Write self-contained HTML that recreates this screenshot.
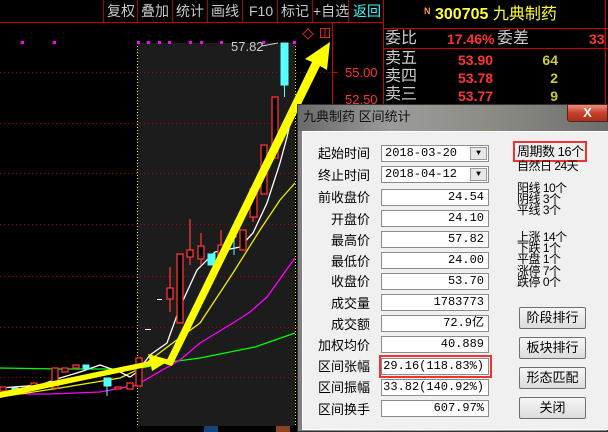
<!DOCTYPE html>
<html><head><meta charset="utf-8"><style>
*{margin:0;padding:0;box-sizing:border-box}
body{width:608px;height:432px;background:#000;position:relative;overflow:hidden;font-family:"Liberation Sans","Noto Sans CJK SC","WenQuanYi Zen Hei",sans-serif}
.a{position:absolute;white-space:nowrap}
.mi{position:absolute;top:3px;font-size:14px;color:#c8c8c8;line-height:16px}
.sep{position:absolute;top:0;width:1px;height:22px;background:#a00}
.lbl{position:absolute;font-size:13px;color:#000;right:238px;line-height:15px;text-align:right}
.in{position:absolute;left:381px;width:108px;height:17px;background:#fff;border:1px solid #8c8c8c;font-size:12px;line-height:15px;text-align:right;padding-right:4px;font-family:"Liberation Mono","Noto Sans CJK SC",monospace;color:#000}
.btn{position:absolute;left:519px;width:67px;height:22px;background:linear-gradient(#f6f6f6,#dcdcdc);border:1px solid #707070;border-radius:2px;font-size:13px;line-height:20px;text-align:center;color:#000}
.st{position:absolute;left:517px;font-size:12px;line-height:12px;color:#000;letter-spacing:-0.5px}
</style></head><body>
<!-- top bar -->
<div class="a" style="left:0;top:22px;width:384px;height:1px;background:#c00"></div>
<div class="sep" style="left:103px"></div><div class="sep" style="left:137px"></div><div class="sep" style="left:172px"></div><div class="sep" style="left:207px"></div><div class="sep" style="left:242px"></div><div class="sep" style="left:277px"></div><div class="sep" style="left:312px"></div><div class="sep" style="left:348px"></div>
<div class="mi" style="left:107px">复权</div><div class="mi" style="left:141px">叠加</div><div class="mi" style="left:176px">统计</div><div class="mi" style="left:211px">画线</div><div class="mi" style="left:249px;font-family:'Liberation Sans',sans-serif">F10</div><div class="mi" style="left:281px">标记</div><div class="mi" style="left:313px">+自选</div><div class="mi" style="left:353px;color:#3ff">返回</div>
<!-- chart -->
<svg class="a" style="left:0;top:0" width="384" height="432">
<rect x="138" y="43" width="157" height="383" fill="#1c1c1c"/>
<g stroke="#a00" stroke-dasharray="1,3" stroke-width="1">
<line x1="0" y1="72.5" x2="332" y2="72.5"/><line x1="0" y1="123.5" x2="332" y2="123.5"/><line x1="0" y1="173.5" x2="332" y2="173.5"/><line x1="0" y1="224.5" x2="332" y2="224.5"/><line x1="0" y1="276.5" x2="332" y2="276.5"/><line x1="0" y1="327.5" x2="332" y2="327.5"/><line x1="0" y1="377.5" x2="332" y2="377.5"/></g>
<g stroke="#ee0" stroke-dasharray="1,2"><line x1="137.5" y1="43" x2="137.5" y2="426"/><line x1="295.5" y1="43" x2="295.5" y2="426"/></g>
<g fill="#f0f"><rect x="21" y="41" width="3" height="3"/><rect x="53" y="41" width="3" height="3"/><rect x="137" y="41" width="3" height="3"/><rect x="147" y="41" width="3" height="3"/><rect x="158" y="41" width="3" height="3"/><rect x="168" y="41" width="3" height="3"/><rect x="189" y="41" width="3" height="3"/><rect x="200" y="41" width="3" height="3"/><rect x="220" y="41" width="3" height="3"/><rect x="262" y="41" width="3" height="3"/><rect x="293" y="41" width="3" height="3"/></g>
<line x1="332.5" y1="22" x2="332.5" y2="432" stroke="#c00"/>
<line x1="332" y1="72.5" x2="338" y2="72.5" stroke="#c00"/>
<text x="345" y="77" fill="#f33" font-size="13" font-family="Liberation Sans">55.00</text>
<text x="345" y="104" fill="#f33" font-size="13" font-family="Liberation Sans">52.50</text>
<text x="231" y="51" fill="#ccc" font-size="13" font-family="Liberation Sans">57.82</text>
<line x1="262" y1="46" x2="278" y2="43" stroke="#ccc"/>
<path d="M308 29 L313 34 L308 39 L303 34Z" fill="none" stroke="#d22"/>
<rect x="320.5" y="28.5" width="9" height="9" fill="none" stroke="#d22"/><line x1="325" y1="28" x2="325" y2="37" stroke="#d22"/>
<!-- MAs -->
<polyline fill="none" stroke="#0f0" stroke-width="1.3" points="0,368 60,369 137,369 170,362 200,358 255,347 295,333"/>
<polyline fill="none" stroke="#f0f" stroke-width="1.3" points="0,393 30,394 50,394 100,392 137,385 157,373 180,360 200,343 233,323 250,312 267,297 295,258"/>
<polyline fill="none" stroke="#ee0" stroke-width="1.3" points="0,397 60,388 120,378 137,370 170,345 200,323 233,273 260,230 280,200 295,183"/>
<polyline fill="none" stroke="#fff" stroke-width="1.3" points="0,388 40,385 60,378 80,372 100,365 120,372 130,377 137,372 150,355 167,343 180,307 197,270 215,252 240,247 253,233 267,203 280,163 287,137 292,115"/>
<!-- candles -->
<g fill="#000" stroke="#f33" stroke-width="1.3">
<line x1="170" y1="267" x2="170" y2="312"/><rect x="167" y="288" width="6" height="11"/>
<rect x="177" y="254" width="6" height="69"/>
<line x1="190" y1="219" x2="190" y2="265"/><rect x="187" y="250" width="6" height="7"/>
<line x1="201" y1="233" x2="201" y2="265"/><rect x="198" y="246" width="6" height="13"/>
<line x1="221" y1="230" x2="221" y2="265"/><rect x="218" y="245" width="6" height="12"/>
<rect x="240" y="230" width="6" height="20"/>
<line x1="253" y1="189" x2="253" y2="222"/><rect x="250" y="189" width="7" height="28"/>
<rect x="261" y="145" width="6" height="49"/>
<rect x="272" y="97" width="6" height="61"/>
<rect x="136" y="358" width="6" height="28"/>
<rect x="127" y="383" width="6" height="6"/><rect x="115" y="387" width="6" height="2"/>
<rect x="0" y="387" width="6" height="4"/><rect x="22" y="388" width="6" height="3"/><rect x="31" y="383" width="6" height="4"/>
<rect x="52" y="368" width="6" height="20"/><rect x="62" y="368" width="6" height="4"/><rect x="73" y="365" width="6" height="3"/>
</g>
<g fill="#5ff" stroke="#5ff"><rect x="208" y="254" width="7" height="11"/><rect x="232" y="232" width="4" height="5"/><line x1="234" y1="237" x2="234" y2="255"/><rect x="281" y="43" width="7" height="42"/><line x1="284.5" y1="85" x2="284.5" y2="97"/><rect x="104" y="378" width="7" height="8"/><line x1="107" y1="386" x2="107" y2="396"/><rect x="83" y="365" width="6" height="4"/><rect x="12" y="388" width="6" height="3"/></g>
<g stroke="#fff"><line x1="157" y1="299.5" x2="162" y2="299.5"/><line x1="145" y1="329.5" x2="151" y2="329.5"/></g>
<!-- arrows -->
<path d="M0 398 L0 392 L150 361 L148 354 L170 360 L152 371 L151 366 Z" fill="#ff0"/>
<path d="M165 364 L312 62 L305 59 L330 42 L327 70 L320 66 L172 366 Z" fill="#ff0"/>
<rect x="204" y="426" width="14" height="6" fill="#147"/><rect x="276" y="426" width="14" height="6" fill="#842"/>
</svg>
<!-- right panel -->
<div class="a" style="left:383px;top:0;width:1px;height:432px;background:#c00"></div>
<div class="a" style="left:605px;top:0;width:1px;height:110px;background:#c00"></div>
<div class="a" style="left:384px;top:28px;width:224px;height:1px;background:#c00"></div>
<div class="a" style="left:384px;top:48px;width:224px;height:1px;background:#c00"></div>
<div class="a" style="left:424px;top:6px;font-size:9px;color:#f93;font-weight:bold">N</div>
<div class="a" style="left:435px;top:5px;font-size:16px;color:#ff3;font-weight:bold;line-height:20px">300705 <span style="font-weight:normal">九典制药</span></div>
<div class="a" style="left:385px;top:30px;font-size:16px;color:#ccc;line-height:18px">委比</div>
<div class="a" style="left:447px;top:31px;font-size:14px;color:#f33;font-weight:bold">17.46%</div>
<div class="a" style="left:497px;top:30px;font-size:16px;color:#ccc;line-height:18px">委差</div>
<div class="a" style="left:589px;top:31px;font-size:14px;color:#f33;font-weight:bold">33</div>
<div class="a" style="left:385px;top:50px;font-size:16px;color:#ccc;line-height:18px">卖五<br>卖四<br>卖三</div>
<div class="a" style="left:458px;top:51px;font-size:14px;color:#f33;font-weight:bold;line-height:18px">53.90<br>53.78<br>53.77</div>
<div class="a" style="left:536px;top:51px;font-size:14px;color:#cc3;font-weight:bold;line-height:18px;text-align:right;width:22px">64<br>2<br>9</div>
<!-- dialog -->
<div class="a" style="left:297px;top:104px;width:311px;height:328px;background:linear-gradient(90deg,#7e7e7e,#a9a9a9 40%,#8c8c8c);border:1px solid #333"></div>
<div class="a" style="left:298px;top:105px;width:310px;height:26px;background:linear-gradient(90deg,#6a6a6a,#9b9b9b 30%,#8d8d86 60%,#6e6e6e)"></div>
<div class="a" style="left:303px;top:109px;font-size:13px;color:#111;line-height:16px">九典制药 区间统计</div>
<div class="a" style="left:567px;top:104px;width:41px;height:18px;background:linear-gradient(#e89080,#c8402c 50%,#a8301c);border:1px solid #522;border-radius:0 0 0 3px;color:#fff;font-weight:bold;font-size:13px;text-align:center;line-height:16px;font-family:'Liberation Sans',sans-serif">X</div>
<div class="a" style="left:302px;top:131px;width:306px;height:299px;background:#f0f0f0;border:1px solid #fff;border-right:none"></div>
<div class="lbl" style="top:146px">起始时间</div>
<div class="lbl" style="top:168px">终止时间</div>
<div class="lbl" style="top:190px">前收盘价</div>
<div class="lbl" style="top:212px">开盘价</div>
<div class="lbl" style="top:233px">最高价</div>
<div class="lbl" style="top:254px">最低价</div>
<div class="lbl" style="top:274px">收盘价</div>
<div class="lbl" style="top:296px">成交量</div>
<div class="lbl" style="top:317px">成交额</div>
<div class="lbl" style="top:338px">加权均价</div>
<div class="lbl" style="top:359px">区间张幅</div>
<div class="lbl" style="top:380px">区间振幅</div>
<div class="lbl" style="top:402px">区间换手</div>
<div class="in" style="top:145px;text-align:left;padding-left:3px">2018-03-20<span style="position:absolute;right:1px;top:1px;width:17px;height:13px;background:#e8e8e8;border:1px solid #999;font-size:8px;line-height:11px;text-align:center">▼</span></div>
<div class="in" style="top:166px;text-align:left;padding-left:3px">2018-04-12<span style="position:absolute;right:1px;top:1px;width:17px;height:13px;background:#e8e8e8;border:1px solid #999;font-size:8px;line-height:11px;text-align:center">▼</span></div>
<div class="in" style="top:189px">24.54</div>
<div class="in" style="top:210px">24.10</div>
<div class="in" style="top:231px">57.82</div>
<div class="in" style="top:252px">24.00</div>
<div class="in" style="top:273px">53.70</div>
<div class="in" style="top:294px">1783773</div>
<div class="in" style="top:315px">72.9亿</div>
<div class="in" style="top:336px">40.889</div>
<div class="in" style="top:358px">29.16(118.83%)</div>
<div class="a" style="left:379px;top:355px;width:113px;height:23px;border:2px solid #e33"></div>
<div class="in" style="top:379px">33.82(140.92%)</div>
<div class="in" style="top:400px">607.97%</div>
<div class="st" style="top:146px;font-size:13px">周期数 16个</div>
<div class="a" style="left:513px;top:141px;width:74px;height:21px;border:2px solid #e33"></div>
<div class="st" style="top:160px">自然日 24天</div>
<div class="st" style="top:183px;line-height:11px">阳线 10个<br>阴线 3个<br>平线 3个</div>
<div class="st" style="top:232px;line-height:11.2px">上涨 14个<br>下跌 1个<br>平盘 1个<br>涨停 7个<br>跌停 0个</div>
<div class="btn" style="top:307px">阶段排行</div>
<div class="btn" style="top:337px">板块排行</div>
<div class="btn" style="top:367px">形态匹配</div>
<div class="btn" style="top:397px">关闭</div>
</body></html>
